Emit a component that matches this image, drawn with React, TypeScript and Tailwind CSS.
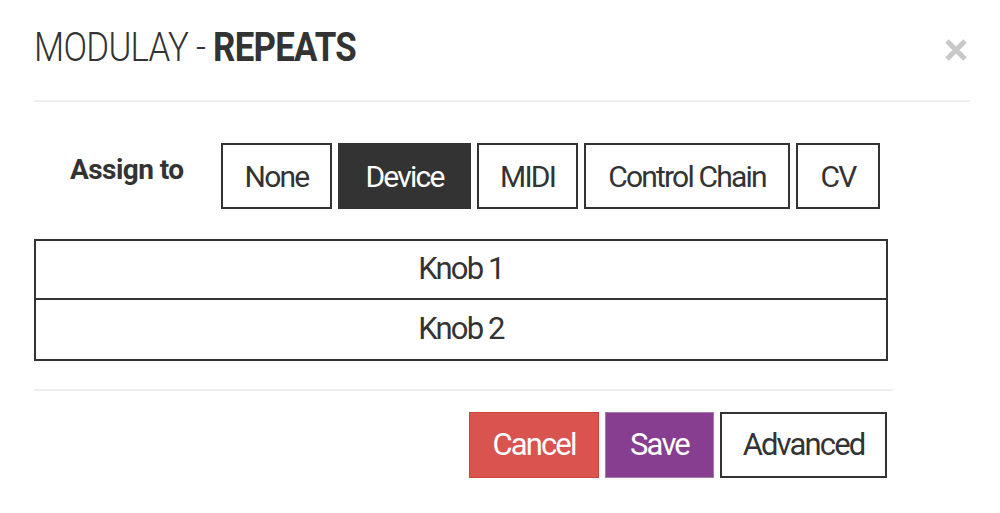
import React from "react";

export default function App() {
  const assign = [
    { label: "None", w: "w-[111px]", active: false },
    { label: "Device", w: "w-[133px]", active: true },
    { label: "MIDI", w: "w-[101px]", active: false },
    { label: "Control Chain", w: "w-[206px]", active: false },
    { label: "CV", w: "w-[84px]", active: false },
  ];
  return (
    <div className="w-[1000px] h-[513px] bg-white text-[#333] overflow-hidden pl-[34px] pr-[30px] pt-[24px] font-['Roboto',sans-serif]">
      <div className="flex justify-between items-start">
        <h1 className="inline-block origin-left scale-x-[0.87] text-[40px] leading-[48px] font-light tracking-[-0.02em] text-[#333] whitespace-nowrap">
          MODULAY - <span className="font-bold">REPEATS</span>
        </h1>
        <div className="mt-[14px] mr-[2px] text-[#c8c8c8]">
          <svg width="24" height="24" viewBox="0 0 24 24">
            <path d="M3 3 L21 21 M21 3 L3 21" stroke="currentColor" strokeWidth="5" strokeLinecap="butt" />
          </svg>
        </div>
      </div>
      <div className="mt-[28px] h-[2px] bg-[#eeeeee]" />

      <div className="mt-[41px] flex items-center">
        <div className="ml-[36px] w-[114px] text-[28px] font-bold tracking-[-0.02em] -mt-[12px] whitespace-nowrap">
          Assign to
        </div>
        <div className="ml-[37px] flex gap-[6px]">
          {assign.map((b) => (
            <button
              key={b.label}
              className={`${b.w} h-[66px] border-2 border-[#333] text-[30px] tracking-[-0.06em] flex items-center justify-center ${
                b.active ? "bg-[#333] text-white" : "bg-white text-[#333]"
              }`}
            >
              {b.label}
            </button>
          ))}
        </div>
      </div>

      <div className="mt-[30px] w-[854px] border-2 border-[#333]">
        <div className="h-[59px] flex items-center justify-center text-[31px] tracking-[-0.06em] border-b-2 border-[#333]">
          Knob 1
        </div>
        <div className="h-[59px] flex items-center justify-center text-[31px] tracking-[-0.06em]">
          Knob 2
        </div>
      </div>

      <div className="mt-[28px] w-[859px] h-[2px] bg-[#eeeeee]" />

      <div className="mt-[21px] w-[853px] flex justify-end gap-[6px]">
        <button className="w-[130px] h-[66px] bg-[#d9534f] border border-[#d43f3a] text-white text-[31px] tracking-[-0.06em] flex items-center justify-center">
          Cancel
        </button>
        <button className="w-[109px] h-[66px] bg-[#873e91] border border-[#a27aaa] text-white text-[31px] tracking-[-0.06em] flex items-center justify-center">
          Save
        </button>
        <button className="w-[167px] h-[66px] bg-white border-2 border-[#333] text-[#333] text-[31px] tracking-[-0.06em] flex items-center justify-center">
          Advanced
        </button>
      </div>
    </div>
  );
}
